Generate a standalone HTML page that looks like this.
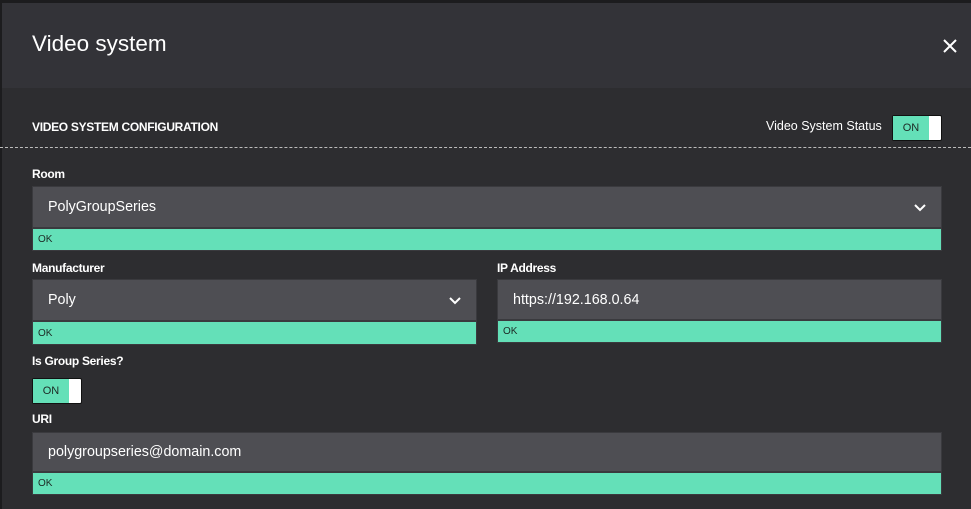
<!DOCTYPE html>
<html><head><style>
*{box-sizing:border-box;margin:0;padding:0}
body{width:971px;height:509px;overflow:hidden;background:#2d2d30;font-family:"Liberation Sans",sans-serif;position:relative;color:#fff}
.a{position:absolute}
.top{left:0;top:0;width:971px;height:3px;background:#1c1c1e}
.left{left:0;top:0;width:2px;height:509px;background:#1c1c1e}
.hdr{left:2px;top:3px;width:969px;height:85px;background:#333338}
.lbl{font-size:12px;font-weight:bold;letter-spacing:-0.3px}
.box{background:#4e4e53;border:1px solid #3a3a3e;font-size:14.3px;padding-left:15px;display:flex;align-items:center}
.ok{background:#64e0b8;border:1px solid #3a3a3e;color:#1d2a25;font-size:10px;padding-left:5px;display:flex;align-items:center}
.tg{background:#fff;border:1px solid #111;border-radius:2px}
.tg span{position:absolute;left:0;top:0;bottom:0;width:36px;background:#64e0b8;color:#1d2a25;font-size:11px;display:flex;align-items:center;justify-content:center}
.chev{position:absolute;right:14px;top:50%;margin-top:-4px}
</style></head><body>
<div class="a top"></div><div class="a left"></div>
<div class="a hdr"></div>
<div class="a" style="left:32px;top:31px;font-size:22.5px">Video system</div>
<svg class="a" style="left:942px;top:38px" width="16" height="16"><path d="M2 2L14 14M14 2L2 14" stroke="#fff" stroke-width="2"/></svg>
<div class="a lbl" style="left:32px;top:120px">VIDEO SYSTEM CONFIGURATION</div>
<div class="a" style="left:766px;top:119px;font-size:12.5px">Video System Status</div>
<div class="a tg" style="left:892px;top:115px;width:50px;height:26px"><span>ON</span></div>
<div class="a" style="left:0;top:147px;width:971px;border-top:1px dashed #bbb"></div>
<div class="a lbl" style="left:32px;top:167px">Room</div>
<div class="a box" style="left:32px;top:186px;width:910px;height:42px">PolyGroupSeries<svg class="chev" width="14" height="9"><path d="M2 2L7 7L12 2" stroke="#fff" stroke-width="2" fill="none"/></svg></div>
<div class="a ok" style="left:32px;top:228px;width:910px;height:23px">OK</div>
<div class="a lbl" style="left:32px;top:261px">Manufacturer</div>
<div class="a box" style="left:32px;top:279px;width:445px;height:42px">Poly<svg class="chev" width="14" height="9"><path d="M2 2L7 7L12 2" stroke="#fff" stroke-width="2" fill="none"/></svg></div>
<div class="a ok" style="left:32px;top:321px;width:445px;height:24px">OK</div>
<div class="a lbl" style="left:497px;top:261px">IP Address</div>
<div class="a box" style="left:497px;top:279px;width:445px;height:41px">https://192.168.0.64</div>
<div class="a ok" style="left:497px;top:320px;width:445px;height:23px">OK</div>
<div class="a lbl" style="left:32px;top:354px">Is Group Series?</div>
<div class="a tg" style="left:32px;top:378px;width:50px;height:26px"><span>ON</span></div>
<div class="a lbl" style="left:32px;top:412px">URI</div>
<div class="a box" style="left:32px;top:432px;width:910px;height:40px">polygroupseries@domain.com</div>
<div class="a ok" style="left:32px;top:472px;width:910px;height:23px">OK</div>
</body></html>
